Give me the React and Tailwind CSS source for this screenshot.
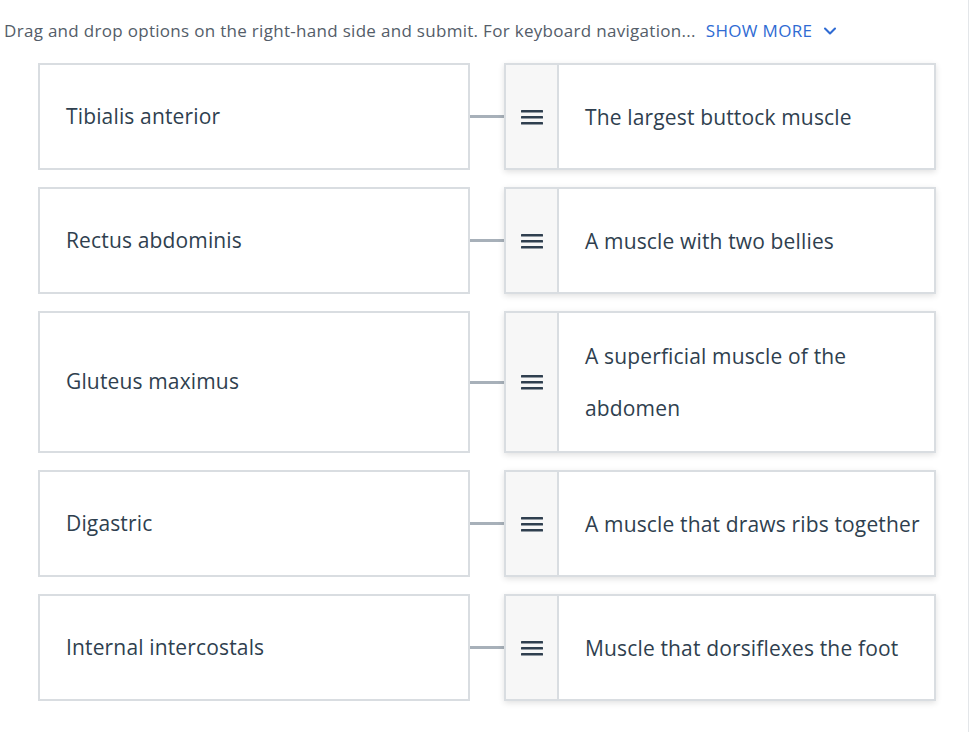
import { ChevronDown } from "lucide-react";

const pairs = [
  { left: "Tibialis anterior", right: "The largest buttock muscle" },
  { left: "Rectus abdominis", right: "A muscle with two bellies" },
  { left: "Gluteus maximus", right: "A superficial muscle of the abdomen" },
  { left: "Digastric", right: "A muscle that draws ribs together" },
  { left: "Internal intercostals", right: "Muscle that dorsiflexes the foot" },
];

function Handle() {
  return (
    <svg width="24" height="18" viewBox="0 0 24 18" className="text-[#2f3f4f]">
      <rect x="1" y="2" width="22" height="2.5" rx="0.5" fill="currentColor" />
      <rect x="1" y="8" width="22" height="2.5" rx="0.5" fill="currentColor" />
      <rect x="1" y="14" width="22" height="2.5" rx="0.5" fill="currentColor" />
    </svg>
  );
}

export default function App() {
  return (
    <div
      className="w-[969px] min-h-[732px] bg-white border-r border-[#e3e6e9] text-[#2f3f4f]"
      style={{ fontFamily: "'Open Sans', Lato, sans-serif" }}
    >
      {/* instructions */}
      <div className="flex items-center pl-[4px] pt-[19px] text-[17px] leading-6 tracking-[0.3px]">
        <span className="text-[#545d69]">
          Drag and drop options on the right-hand side and submit. For keyboard navigation...
        </span>
        <button className="ml-[10px] flex items-center gap-[8px] text-[#2f6bd3]">
          SHOW MORE
          <ChevronDown size={20} strokeWidth={2.5} />
        </button>
      </div>

      {/* matching rows */}
      <div className="flex flex-col gap-[17px] pl-[38px] pt-[20px]">
        {pairs.map((p) => (
          <div key={p.left} className="flex items-stretch">
            <div className="w-[432px] min-h-[107px] flex items-center border-2 border-[#d9dde1] bg-white pl-[26px] text-[21px] tracking-[0.15px]">
              {p.left}
            </div>
            <div className="w-[34px] flex items-center">
              <div className="h-[3px] w-full bg-[#a7b0b9]" />
            </div>
            <div className="w-[432px] flex border-2 border-[#d9dde1] bg-white shadow-[0_2px_6px_rgba(0,0,0,0.12)]">
              <div className="w-[53px] flex items-center justify-center bg-[#f7f7f7] border-r-2 border-[#d9dde1]">
                <Handle />
              </div>
              <div className="flex-1 flex items-center pl-[26px] pr-[8px] py-[17px] text-[21px] leading-[52px] tracking-[0.15px]">
                {p.right}
              </div>
            </div>
          </div>
        ))}
      </div>
    </div>
  );
}
